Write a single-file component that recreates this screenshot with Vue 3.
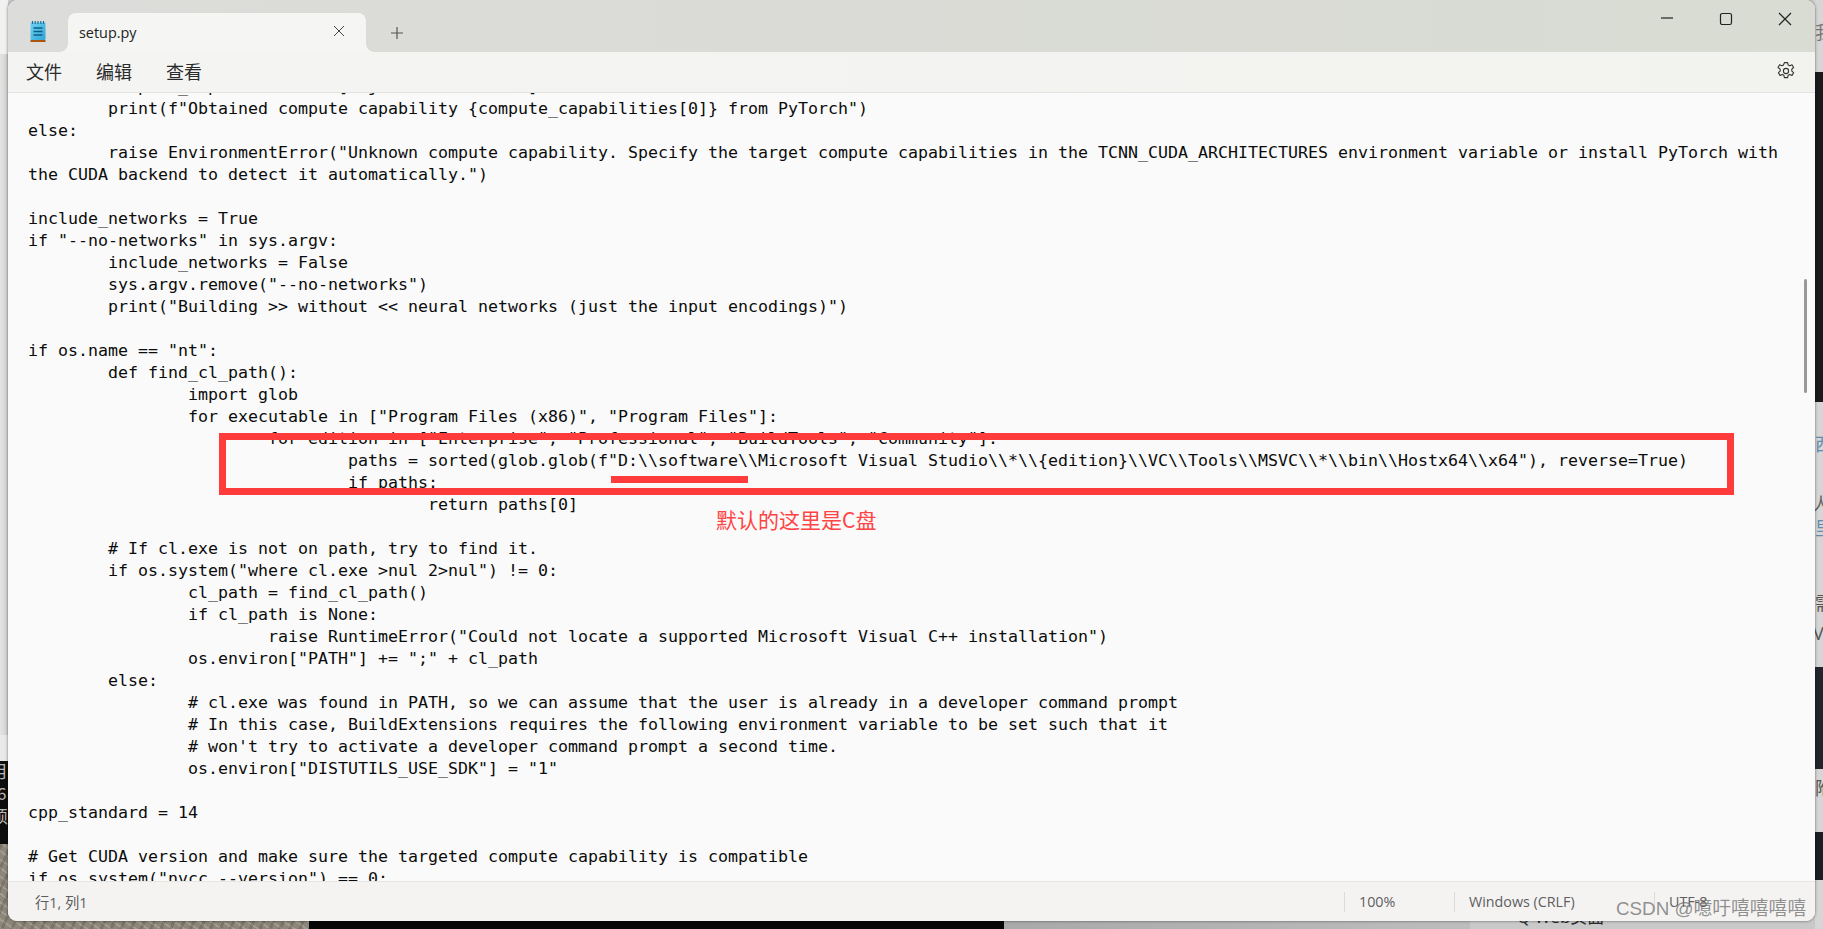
<script setup>
const lines = [
  '        compute_capabilities = [major * 10 + minor]',
  '        print(f"Obtained compute capability {compute_capabilities[0]} from PyTorch")',
  'else:',
  '        raise EnvironmentError("Unknown compute capability. Specify the target compute capabilities in the TCNN_CUDA_ARCHITECTURES environment variable or install PyTorch with',
  'the CUDA backend to detect it automatically.")',
  '',
  'include_networks = True',
  'if "--no-networks" in sys.argv:',
  '        include_networks = False',
  '        sys.argv.remove("--no-networks")',
  '        print("Building >> without << neural networks (just the input encodings)")',
  '',
  'if os.name == "nt":',
  '        def find_cl_path():',
  '                import glob',
  '                for executable in ["Program Files (x86)", "Program Files"]:',
  '                        for edition in ["Enterprise", "Professional", "BuildTools", "Community"]:',
  '                                paths = sorted(glob.glob(f"D:\\\\software\\\\Microsoft Visual Studio\\\\*\\\\{edition}\\\\VC\\\\Tools\\\\MSVC\\\\*\\\\bin\\\\Hostx64\\\\x64"), reverse=True)',
  '                                if paths:',
  '                                        return paths[0]',
  '',
  '        # If cl.exe is not on path, try to find it.',
  '        if os.system("where cl.exe >nul 2>nul") != 0:',
  '                cl_path = find_cl_path()',
  '                if cl_path is None:',
  '                        raise RuntimeError("Could not locate a supported Microsoft Visual C++ installation")',
  '                os.environ["PATH"] += ";" + cl_path',
  '        else:',
  '                # cl.exe was found in PATH, so we can assume that the user is already in a developer command prompt',
  '                # In this case, BuildExtensions requires the following environment variable to be set such that it',
  "                # won't try to activate a developer command prompt a second time.",
  '                os.environ["DISTUTILS_USE_SDK"] = "1"',
  '',
  'cpp_standard = 14',
  '',
  '# Get CUDA version and make sure the targeted compute capability is compatible',
  'if os.system("nvcc --version") == 0:',
]
</script>

<template>
  <div class="page">
    <div class="bk bk-left-top"></div>
    <div class="bk bk-left-grey"></div>
    <div class="bk bk-left-pale"></div>
    <div class="bk bk-left-dark">
      <span class="lg lg1">月</span><span class="lg lg2">6</span><span class="lg lg3">硕</span>
    </div>
    <div class="bk bk-photo"></div>
    <div class="bk bk-black"></div>
    <div class="bk bk-grey-bottom"></div>
    <div class="bk bk-pale-bottom"><span class="web">Q Web页面</span></div>
    <div class="bk bk-right">
      <span class="rg rg1">我</span>
      <span class="rg rg2">西</span>
      <span class="rg rg3">人</span>
      <span class="rg rg4">里</span>
      <span class="rg rg5">需</span>
      <span class="rg rg6">V</span>
      <span class="rg rg7">附</span>
    </div>
    <div class="bk bk-r1"></div>
    <div class="bk bk-r2"></div>
    <div class="bk bk-r3"></div>

    <div class="window">
      <header class="titlebar">
        <svg class="app-icon" width="16" height="22" viewBox="0 0 16 22">
          <defs>
            <linearGradient id="pad" x1="0" y1="0" x2="1" y2="1">
              <stop offset="0" stop-color="#6fd3f2" />
              <stop offset="1" stop-color="#2fa5d8" />
            </linearGradient>
          </defs>
          <rect x="0.5" y="1.5" width="15" height="17.5" rx="1" fill="url(#pad)" />
          <rect x="0.5" y="19" width="15" height="2" fill="#a9550f" />
          <path d="M2.5 0v3M5.2 0v3M8 0v3M10.8 0v3M13.5 0v3" stroke="#1e6f96" stroke-width="1.2" />
          <path d="M3.5 7h9M3.5 10.5h9M3.5 14h9" stroke="#0f5f85" stroke-width="1.7" />
        </svg>
        <div class="tab">
          <span class="tab-name">setup.py</span>
          <svg class="tab-close" width="12" height="12" viewBox="0 0 12 12">
            <path d="M1 1l10 10M11 1L1 11" stroke="#444" stroke-width="1" fill="none" />
          </svg>
        </div>
        <svg class="tab-add" width="14" height="14" viewBox="0 0 14 14">
          <path d="M7 1v12M1 7h12" stroke="#555" stroke-width="1.2" fill="none" />
        </svg>
        <div class="controls">
          <svg width="14" height="14" viewBox="0 0 14 14">
            <path d="M1 6h12" stroke="#222" stroke-width="1.2" fill="none" />
          </svg>
          <svg width="14" height="14" viewBox="0 0 14 14">
            <rect x="1.5" y="1.5" width="11" height="11" rx="1.8" stroke="#222" stroke-width="1.2" fill="none" />
          </svg>
          <svg width="14" height="14" viewBox="0 0 14 14">
            <path d="M1 1l12 12M13 1L1 13" stroke="#222" stroke-width="1.2" fill="none" />
          </svg>
        </div>
      </header>

      <nav class="menubar">
        <span class="menu">文件</span>
        <span class="menu">编辑</span>
        <span class="menu">查看</span>
        <svg class="gear" width="20" height="20" viewBox="0 0 20 20" fill="none" stroke="#333" stroke-width="1.1">
          <circle cx="10" cy="10" r="2.6" />
          <path d="M8.4 1.6h3.2l.5 2.4 1.7.8 2.2-1 1.6 2.7-1.8 1.6v2l1.8 1.6-1.6 2.7-2.2-1-1.7.9-.5 2.3H8.4l-.5-2.3-1.7-.9-2.2 1-1.6-2.7 1.8-1.6v-2L2 6.5l1.6-2.7 2.2 1 1.7-.8z" stroke-linejoin="round" />
        </svg>
      </nav>

      <main class="editor">
        <div class="code">
          <div v-for="(line, i) in lines" :key="i" class="line">{{ line }}</div>
        </div>
        <div class="thumb"></div>
      </main>

      <footer class="statusbar">
        <span class="pos">行1, 列1</span>
        <span class="cell zoom">100%</span>
        <span class="cell eol">Windows (CRLF)</span>
        <span class="cell enc">UTF-8</span>
      </footer>
    </div>

    <div class="mark-box"></div>
    <div class="mark-line"></div>
    <div class="mark-note">默认的这里是C盘</div>
    <div class="watermark">CSDN @噫吁嘻嘻嘻嘻</div>
  </div>
</template>

<style>
html, body { margin: 0; background: #cfcfcf; }
</style>

<style scoped>
.page {
  position: relative;
  width: 1823px;
  height: 929px;
  overflow: hidden;
  padding-left: 8px;
  box-sizing: border-box;
  font-family: "Open Sans", "Noto Sans CJK SC", sans-serif;
}
.bk { position: absolute; overflow: hidden; }
.bk-left-top { left: 0; top: 0; width: 8px; height: 54px; background: #f1f1f1; }
.bk-left-grey { left: 0; top: 54px; width: 8px; height: 681px; background: linear-gradient(90deg, #e4e4e4 0, #d0d0d0 100%); }
.bk-left-pale { left: 0; top: 735px; width: 8px; height: 26px; background: #e9e9e9; }
.bk-left-dark { left: 0; top: 761px; width: 8px; height: 83px; background: #0d0d0d; }
.lg { position: absolute; left: -9px; color: #b8b8b8; font-size: 17px; line-height: 20px; font-family: "Noto Sans CJK SC", sans-serif; }
.lg1 { top: 0; }
.lg2 { top: 22px; left: -3px; }
.lg3 { top: 45px; }
.bk-photo {
  left: 0; top: 844px; width: 309px; height: 85px;
  background:
    repeating-linear-gradient(115deg, rgba(60,50,40,.22) 0 3px, transparent 3px 9px),
    repeating-linear-gradient(35deg, rgba(240,235,225,.2) 0 2px, transparent 2px 7px),
    #8d867b;
}
.bk-black { left: 309px; top: 915px; width: 695px; height: 14px; background: #060606; }
.bk-grey-bottom { left: 1004px; top: 915px; width: 466px; height: 14px; background: linear-gradient(90deg, #a9a9a9, #bdbdbd); }
.bk-pale-bottom { left: 1470px; top: 915px; width: 353px; height: 14px; background: #c9c9c9; }
.web { position: absolute; left: 47px; top: -8px; font-size: 17px; line-height: 20px; color: #2a2a2a; white-space: nowrap; }
.bk-right { left: 1815px; top: 0; width: 8px; height: 929px; background: #d6d6d6; }
.rg { position: absolute; left: 0; font-size: 18px; line-height: 22px; color: #555; font-family: "Noto Sans CJK SC", sans-serif; }
.rg1 { top: 20px; color: #777; }
.rg2 { top: 432px; color: #5f8db0; }
.rg3 { top: 492px; left: -3px; color: #666; }
.rg4 { top: 516px; color: #5f8db0; }
.rg5 { top: 591px; }
.rg6 { top: 622px; left: -2px; font-family: "Open Sans", sans-serif; }
.rg7 { top: 776px; }
.bk-r1 { left: 1815px; top: 72px; width: 8px; height: 330px; background: #1b1b1e; }
.bk-r2 { left: 1815px; top: 667px; width: 8px; height: 102px; background: #23252e; }
.bk-r3 { left: 1815px; top: 832px; width: 8px; height: 48px; background: #1c1e26; }

.window {
  position: relative;
  width: 1807px;
  height: 921px;
  display: flex;
  flex-direction: column;
  border-radius: 9px;
  overflow: hidden;
  box-shadow: 0 0 3px rgba(0, 0, 0, .55);
  background: #fafafa;
}

.titlebar {
  height: 52px;
  flex: none;
  display: flex;
  align-items: flex-end;
  padding-left: 22px;
  box-sizing: border-box;
  background: linear-gradient(90deg, #dcdcda 0, #dadbd6 50%, #d8dcd2 100%);
}
.app-icon { align-self: flex-start; margin-top: 21px; margin-right: 22px; }
.tab {
  position: relative;
  width: 298px;
  height: 39px;
  box-sizing: border-box;
  display: flex;
  align-items: center;
  justify-content: space-between;
  padding: 0 21px 1px 11px;
  background: #f5f5f3;
  border-radius: 8px 8px 0 0;
}
.tab::before,
.tab::after {
  content: "";
  position: absolute;
  bottom: 0;
  width: 8px;
  height: 8px;
}
.tab::before { left: -8px; background: radial-gradient(circle at 0 0, transparent 7.5px, #f5f5f3 8px); }
.tab::after { right: -8px; background: radial-gradient(circle at 100% 0, transparent 7.5px, #f5f5f3 8px); }
.tab-name { font-size: 14.4px; color: #222; font-family: "Open Sans", sans-serif; }
.tab-close { margin-top: -2px; }
.tab-add { align-self: flex-start; margin: 26px 0 0 24px; }
.controls {
  margin-left: auto;
  align-self: flex-start;
  display: flex;
  gap: 45px;
  margin-top: 12px;
  margin-right: 23px;
}

.menubar {
  height: 41px;
  flex: none;
  display: flex;
  align-items: center;
  gap: 34px;
  padding-left: 18px;
  padding-right: 19px;
  box-sizing: border-box;
  background: linear-gradient(90deg, #f4f4f3 0, #f2f3ef 100%);
  border-bottom: 1px solid #e3e3e1;
}
.menu {
  font-family: "Noto Sans CJK SC", sans-serif;
  font-size: 18px;
  line-height: 24px;
  color: #2a2a2a;
  margin-top: -2px;
}
.gear { margin-left: auto; margin-top: -3px; }

.editor {
  position: relative;
  flex: 1;
  min-height: 0;
  overflow: hidden;
  background: #fafafa;
}
.code {
  margin-top: -17px;
  padding-left: 20px;
  font-family: "DejaVu Sans Mono", monospace;
  font-size: 16.62px;
  line-height: 22px;
  color: #0c0c0c;
}
.line { white-space: pre; height: 22px; }
.thumb {
  position: absolute;
  right: 8px;
  top: 186px;
  width: 3px;
  height: 114px;
  border-radius: 2px;
  background: #999;
}

.statusbar {
  height: 40px;
  flex: none;
  position: relative;
  display: flex;
  align-items: center;
  box-sizing: border-box;
  border-top: 1px solid #e6e5e4;
  background: #f4f3f2;
  font-family: "Open Sans", "Noto Sans CJK SC", sans-serif;
  font-size: 14.3px;
  color: #5e5e5e;
}
.pos { margin-left: 27px; width: 1309px; }
.cell {
  height: 20px;
  line-height: 20px;
  border-left: 1px solid #dcdbda;
  padding-left: 14px;
  box-sizing: border-box;
  white-space: nowrap;
}
.zoom { width: 110px; }
.eol { width: 200px; }
.enc { flex: 1; }

.mark-box {
  position: absolute;
  left: 219px;
  top: 433px;
  width: 1515px;
  height: 62px;
  box-sizing: border-box;
  border: 7px solid #ff3b3b;
}
.mark-line {
  position: absolute;
  left: 611px;
  top: 476px;
  width: 137px;
  height: 7px;
  background: #ff3b3b;
}
.mark-note {
  position: absolute;
  left: 716px;
  top: 504px;
  font-family: "Noto Sans CJK SC", sans-serif;
  font-size: 21px;
  line-height: 30px;
  color: #ff4444;
  white-space: nowrap;
}
.watermark {
  position: absolute;
  left: 1616px;
  top: 896px;
  font-family: "Liberation Sans", "Noto Sans CJK SC", sans-serif;
  font-size: 18.8px;
  line-height: 26px;
  color: rgba(110, 110, 110, .75);
  white-space: nowrap;
}
</style>
